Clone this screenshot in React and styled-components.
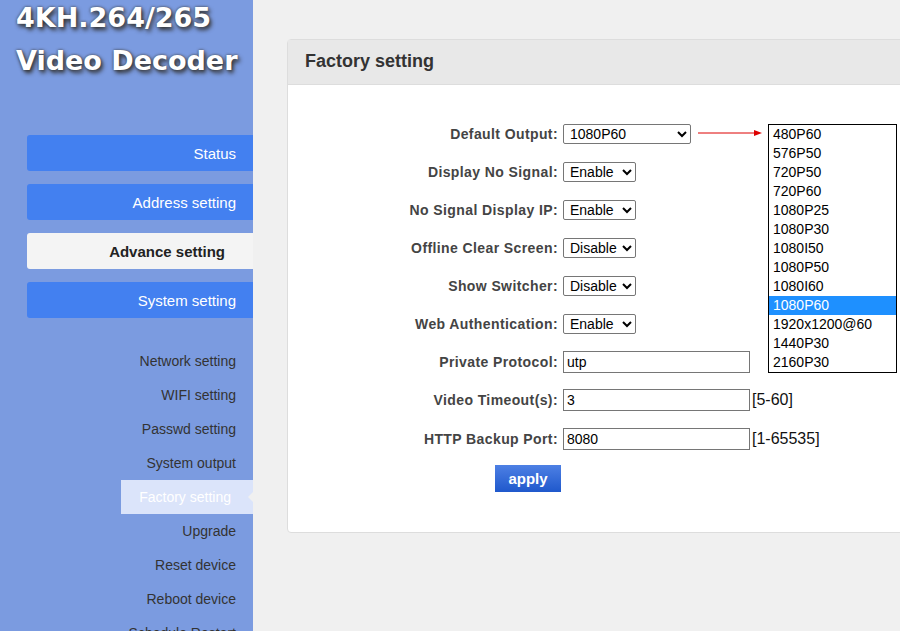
import styled, { createGlobalStyle } from "styled-components";

const Global = createGlobalStyle`
  body { margin: 0; font-family: "Liberation Sans", Arial, sans-serif; background: #f0f0f0; }
`;

const Page = styled.div`
  display: flex;
  width: 900px;
  height: 631px;
  overflow: hidden;
  position: relative;
`;

const Sidebar = styled.div`
  width: 253px;
  flex-shrink: 0;
  background: #7b9be0;
  display: flex;
  flex-direction: column;
`;

const Logo = styled.div`
  font-family: "DejaVu Sans", Verdana, sans-serif;
  font-weight: bold;
  color: #fff;
  font-size: 27px;
  line-height: 43px;
  padding: 0 0 0 16px;
  white-space: nowrap;
  text-shadow: 2px 3px 4px #333, 0 0 3px #444;
  height: 139px;
  box-sizing: border-box;
  margin-top: -4px;
  flex-shrink: 0;
`;

const MainBtn = styled.div`
  margin-left: 27px;
  height: 36px;
  margin-bottom: 13px;
  flex-shrink: 0;
  border-radius: 3px 0 0 3px;
  background: ${(p) => (p.$active ? "#f4f4f4" : "#4380f0")};
  color: ${(p) => (p.$active ? "#222" : "#fff")};
  font-weight: ${(p) => (p.$active ? "bold" : "normal")};
  font-size: 15px;
  display: flex;
  align-items: center;
  justify-content: flex-end;
  padding-right: ${(p) => (p.$active ? "28px" : "17px")};
`;

const SubMenu = styled.div`
  display: flex;
  flex-direction: column;
  margin-top: 13px;
`;

const SubItem = styled.div`
  height: 34px;
  flex-shrink: 0;
  margin-left: ${(p) => (p.$active ? "121px" : "0")};
  background: ${(p) => (p.$active ? "#dbe4fa" : "transparent")};
  color: ${(p) => (p.$active ? "#fff" : "#333")};
  font-size: 14px;
  display: flex;
  align-items: center;
  justify-content: flex-end;
  padding-right: ${(p) => (p.$active ? "22px" : "17px")};
  position: relative;
  &::after {
    content: "";
    display: ${(p) => (p.$active ? "block" : "none")};
    position: absolute;
    right: 0;
    top: 12px;
    border: 5px solid transparent;
    border-right-color: #f0f0f0;
  }
`;

const Main = styled.div`
  flex: 1;
  padding: 39px 0 0 34px;
`;

const Panel = styled.div`
  width: 640px;
  height: 492px;
  background: #fff;
  border: 1px solid #ddd;
  border-radius: 4px;
`;

const PanelHead = styled.div`
  height: 42px;
  padding-bottom: 2px;
  background: #e8e8e8;
  border-bottom: 1px solid #ddd;
  display: flex;
  align-items: center;
  padding-left: 17px;
  font-size: 18px;
  font-weight: bold;
  color: #333;
`;

const Form = styled.div`
  display: grid;
  grid-template-columns: 270px auto;
  column-gap: 5px;
  padding-top: 30px;
  align-items: center;
`;

const Label = styled.div`
  text-align: right;
  font-weight: bold;
  font-size: 14px;
  color: #444;
  letter-spacing: 0.4px;
  height: ${(p) => p.$h || "38px"};
  line-height: ${(p) => p.$h || "38px"};
`;

const Cell = styled.div`
  display: flex;
  align-items: center;
  gap: 2px;
  font-size: 16px;
  color: #111;
  height: ${(p) => p.$h || "38px"};
`;

const Select = styled.select`
  font-family: "Liberation Sans", Arial, sans-serif;
  font-size: 14px;
  height: 20px;
  width: ${(p) => p.$w || "73px"};
  border: 1px solid #767676;
  border-radius: 2px;
  background: #fff;
  color: #000;
  padding: 0 0 0 2px;
`;

const Input = styled.input`
  font-family: "Liberation Sans", Arial, sans-serif;
  font-size: 14px;
  width: 187px;
  height: 22px;
  box-sizing: border-box;
  border: 1px solid #767676;
  padding: 0 3px;
`;

const Apply = styled.button`
  margin: 6px 0 0 207px;
  width: 66px;
  height: 27px;
  border: none;
  background: linear-gradient(#4d80e4, #1f58cc);
  color: #fff;
  font-weight: bold;
  font-size: 15px;
  font-family: "Liberation Sans", Arial, sans-serif;
`;

const Arrow = styled.svg`
  position: absolute;
  left: 698px;
  top: 128px;
`;

const DropList = styled.div`
  position: absolute;
  left: 768px;
  top: 124px;
  width: 127px;
  border: 1px solid #000;
  background: #fff;
  padding: 0;
`;

const Opt = styled.div`
  height: 19px;
  line-height: 19px;
  padding-left: 4px;
  font-size: 14px;
  background: ${(p) => (p.$sel ? "#1e90ff" : "#fff")};
  color: ${(p) => (p.$sel ? "#fff" : "#000")};
`;

const subs = ["Network setting", "WIFI setting", "Passwd setting", "System output", "Factory setting", "Upgrade", "Reset device", "Reboot device", "Schedule Restart"];
const opts = ["480P60", "576P50", "720P50", "720P60", "1080P25", "1080P30", "1080I50", "1080P50", "1080I60", "1080P60", "1920x1200@60", "1440P30", "2160P30"];

export default function App() {
  return (
    <Page>
      <Global />
      <Sidebar>
        <Logo>4KH.264/265<br />Video Decoder</Logo>
        <MainBtn>Status</MainBtn>
        <MainBtn>Address setting</MainBtn>
        <MainBtn $active>Advance setting</MainBtn>
        <MainBtn>System setting</MainBtn>
        <SubMenu>
          {subs.map((s) => (
            <SubItem key={s} $active={s === "Factory setting"}>{s}</SubItem>
          ))}
        </SubMenu>
      </Sidebar>
      <Main>
        <Panel>
          <PanelHead>Factory setting</PanelHead>
          <Form>
            <Label>Default Output:</Label>
            <Cell><Select $w="128px" defaultValue="1080P60">{opts.map((o) => <option key={o}>{o}</option>)}</Select></Cell>
            <Label>Display No Signal:</Label>
            <Cell><Select><option>Enable</option></Select></Cell>
            <Label>No Signal Display IP:</Label>
            <Cell><Select><option>Enable</option></Select></Cell>
            <Label>Offline Clear Screen:</Label>
            <Cell><Select><option>Disable</option></Select></Cell>
            <Label>Show Switcher:</Label>
            <Cell><Select><option>Disable</option></Select></Cell>
            <Label>Web Authentication:</Label>
            <Cell><Select><option>Enable</option></Select></Cell>
            <Label>Private Protocol:</Label>
            <Cell><Input defaultValue="utp" /></Cell>
            <Label>Video Timeout(s):</Label>
            <Cell><Input defaultValue="3" />[5-60]</Cell>
            <Label $h="40px">HTTP Backup Port:</Label>
            <Cell $h="40px"><Input defaultValue="8080" />[1-65535]</Cell>
          </Form>
          <Apply>apply</Apply>
        </Panel>
      </Main>
      <Arrow width="66" height="10">
        <line x1="0" y1="5" x2="58" y2="5" stroke="#d00" strokeWidth="1" />
        <polygon points="56,2 64,5 56,8" fill="#d00" />
      </Arrow>
      <DropList>
        {opts.map((o) => <Opt key={o} $sel={o === "1080P60"}>{o}</Opt>)}
      </DropList>
    </Page>
  );
}
